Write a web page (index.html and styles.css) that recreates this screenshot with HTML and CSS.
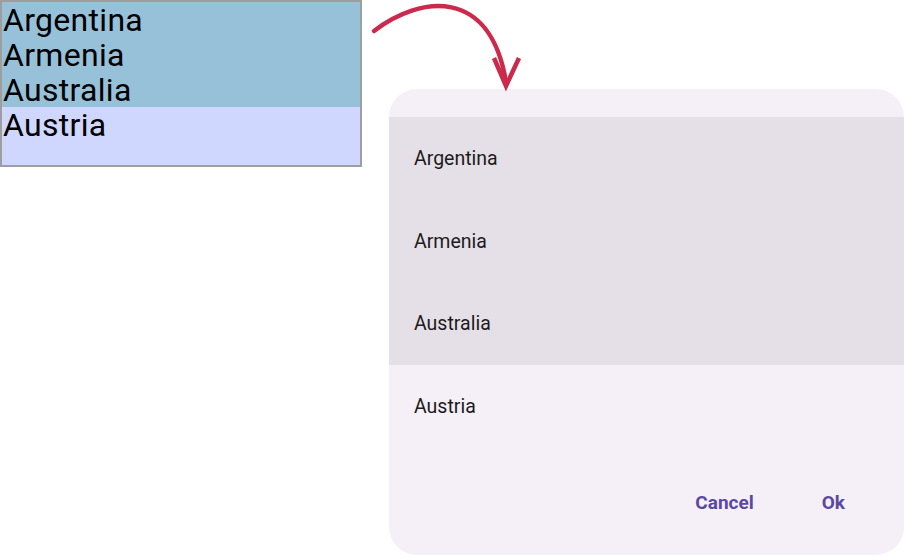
FILE: index.html
```html
<!DOCTYPE html>
<html lang="en">
  <head>
    <meta charset="UTF-8" />
    <meta name="viewport" content="width=device-width, initial-scale=1.0" />
    <title>Multi choice list</title>
    <link rel="stylesheet" href="styles.css">
  </head>
  <body>
    <div class="stage">
      <div class="list-box">
        <div class="option selected">Argentina</div>
        <div class="option selected">Armenia</div>
        <div class="option selected">Australia</div>
        <div class="option last">Austria</div>
      </div>

      <div class="dialog">
        <div class="dialog-head"></div>
        <div class="dialog-row checked">Argentina</div>
        <div class="dialog-row checked">Armenia</div>
        <div class="dialog-row checked">Australia</div>
        <div class="dialog-row">Austria</div>
        <div class="dialog-actions">
          <button class="text-btn">Cancel</button>
          <button class="text-btn">Ok</button>
        </div>
      </div>

      <svg class="arrow" width="904" height="100" viewBox="0 0 904 100">
        <path d="M374 31 C420 -4 490 -14 506 82" fill="none" stroke="#cc2a4d" stroke-width="4.5" stroke-linecap="round" />
        <path d="M494 58 L506 86 L519 58" fill="none" stroke="#cc2a4d" stroke-width="4.5" stroke-linejoin="miter" />
      </svg>
    </div>
  </body>
</html>
```

FILE: styles.css
```css
* {
  margin: 0;
  padding: 0;
  box-sizing: border-box;
}

body {
  font-family: 'Roboto', 'Liberation Sans', sans-serif;
  background-color: #ffffff;
  color: #000000;
  width: 904px;
  height: 556px;
  overflow: hidden;
}

.stage {
  position: relative;
  display: flex;
  align-items: flex-start;
  height: 556px;
}

.list-box {
  width: 362px;
  height: 167px;
  border: 2px solid #9e9e9e;
  background-color: #d0d7ff;
  flex-shrink: 0;
}

.option {
  font-size: 32px;
  letter-spacing: 0.3px;
  line-height: 33px;
  height: 35px;
  padding: 2px 0 0 1px;
  white-space: nowrap;
}

.option.selected {
  background-color: #97c1d9;
}

.dialog {
  margin-left: 27px;
  margin-top: 89px;
  width: 515px;
  height: 466px;
  background-color: #f5f0f7;
  border-radius: 28px;
  overflow: hidden;
  flex-shrink: 0;
  color: #1d1b20;
}

.dialog-head {
  height: 28px;
}

.dialog-row {
  height: 82.5px;
  display: flex;
  align-items: center;
  padding: 1px 0 0 25px;
  font-size: 19.5px;
}

.dialog-row.checked {
  background-color: #e5e0e7;
}

.dialog-actions {
  display: flex;
  justify-content: flex-end;
  gap: 20px;
  padding: 35px 35px 0 0;
}

.text-btn {
  background: none;
  border: none;
  font-family: 'Roboto', 'Liberation Sans', sans-serif;
  font-weight: bold;
  font-size: 19px;
  line-height: 22px;
  padding: 10px 24px;
  color: #5b48a2;
  cursor: pointer;
}

.arrow {
  position: absolute;
  left: 0;
  top: 0;
}
```
